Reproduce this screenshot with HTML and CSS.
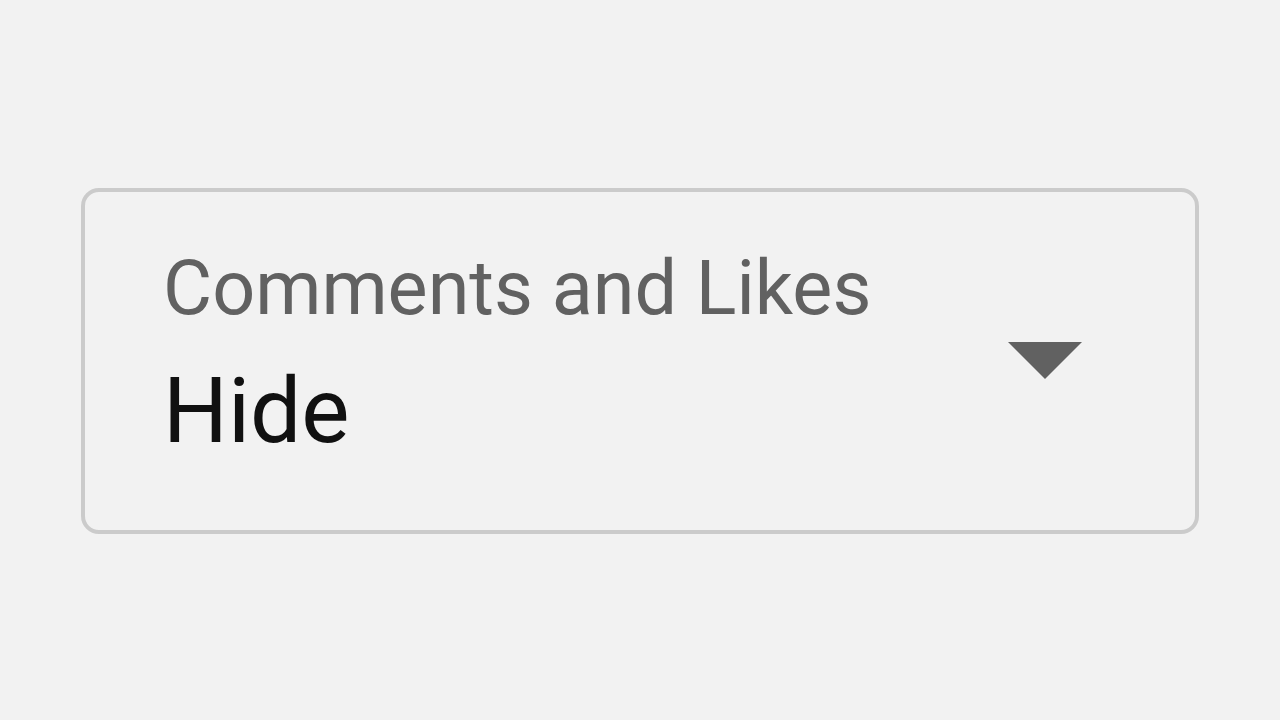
FILE: index.html
```html
<!DOCTYPE html>
<html>
<head>
<meta charset="utf-8">
<link rel="stylesheet" href="styles.css">
</head>
<body>
<div class="page">
  <div class="select">
    <div class="texts">
      <div class="label">Comments and Likes</div>
      <div class="value">Hide</div>
    </div>
    <svg class="arrow" width="74" height="37" viewBox="0 0 74 37"><polygon points="0,0 74,0 37,37" fill="#616161"/></svg>
  </div>
</div>
</body>
</html>
```
FILE: styles.css
```css
html, body {
  margin: 0;
  padding: 0;
  background: #f2f2f2;
}
.page {
  width: 1280px;
  height: 720px;
  padding: 188px 0 0 81px;
  box-sizing: border-box;
  font-family: Roboto, "Liberation Sans", sans-serif;
}
.select {
  width: 1118px;
  height: 346px;
  box-sizing: border-box;
  border: 4px solid #cbcbcb;
  border-radius: 18px;
  display: flex;
  align-items: center;
  justify-content: space-between;
  padding: 0 113px 0 78px;
}
.texts {
  display: flex;
  flex-direction: column;
  gap: 23px;
  padding-bottom: 14px;
}
.label {
  font-size: 75.5px;
  line-height: 90px;
  color: #616161;
}
.value {
  font-size: 91px;
  line-height: 110px;
  color: #111111;
}
.arrow {
  display: block;
  flex: none;
  margin-top: -2px;
}
```
